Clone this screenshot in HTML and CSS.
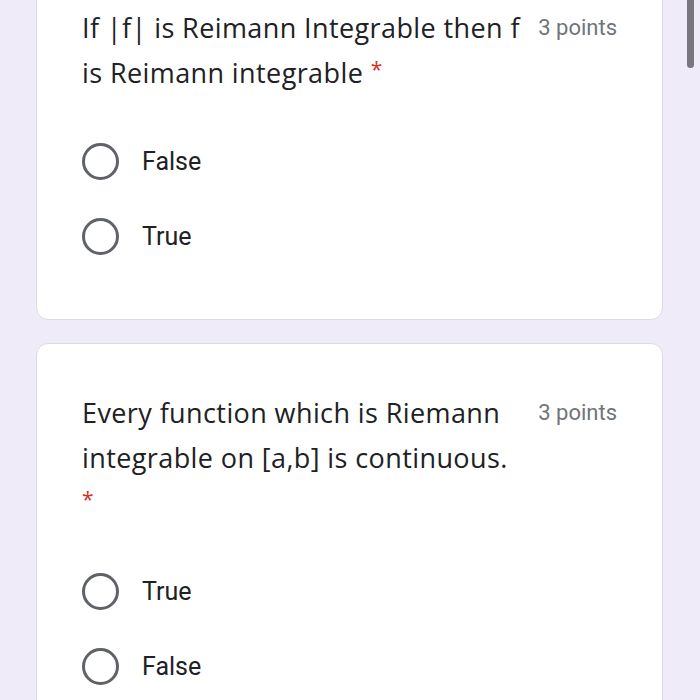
FILE: index.html
```html
<!DOCTYPE html>
<html lang="en">
<head>
    <meta charset="UTF-8">
    <meta name="viewport" content="width=device-width, initial-scale=1.0">
    <title>Quiz</title>
    <link rel="stylesheet" href="styles.css">
</head>
<body>

    <div class="form">
        <div class="card card-first">
            <div class="question">
                <div class="title">If |f| is Reimann Integrable then f is Reimann integrable <span class="req">*</span></div>
                <div class="points">3 points</div>
            </div>
            <div class="options">
                <label class="option"><span class="radio"></span><span class="label">False</span></label>
                <label class="option"><span class="radio"></span><span class="label">True</span></label>
            </div>
        </div>

        <div class="card">
            <div class="question">
                <div class="title">Every function which is Riemann integrable on [a,b] is continuous. <span class="req">*</span></div>
                <div class="points">3 points</div>
            </div>
            <div class="options">
                <label class="option"><span class="radio"></span><span class="label">True</span></label>
                <label class="option"><span class="radio"></span><span class="label">False</span></label>
            </div>
        </div>
    </div>

    <div class="scrollbar"></div>

</body>
</html>
```

FILE: styles.css
```css
* {
    margin: 0;
    padding: 0;
    box-sizing: border-box;
}

body {
    font-family: 'Roboto', 'Liberation Sans', sans-serif;
    background: #f0ebf8;
    color: #202124;
    height: 100vh;
    overflow: hidden;
}

.form {
    display: flex;
    flex-direction: column;
    gap: 23px;
    padding: 0 37px 0 36px;
}

.card {
    background: #fff;
    border: 1px solid #dadce0;
    border-radius: 12px;
    padding: 46px 45px 64px 45px;
}

.card-first {
    margin-top: -42px;
}

.question {
    display: flex;
    align-items: flex-start;
    gap: 14px;
}

.title {
    flex: 1;
    font-family: 'Open Sans', sans-serif;
    font-size: 27px;
    line-height: 45px;
    letter-spacing: 0.4px;
}

.req {
    color: #d93025;
    font-size: 21px;
    line-height: 1;
    vertical-align: 6px;
    letter-spacing: 0;
}

.points {
    font-size: 22px;
    line-height: 45px;
    color: #70757a;
    white-space: nowrap;
}

.options {
    display: flex;
    flex-direction: column;
    gap: 38px;
    margin-top: 48px;
}

.option {
    display: flex;
    align-items: center;
    gap: 23px;
}

.radio {
    width: 37px;
    height: 37px;
    border: 3.5px solid #5f6368;
    border-radius: 50%;
}

.label {
    font-size: 25px;
}

.scrollbar {
    position: fixed;
    top: -4px;
    right: 6px;
    width: 7px;
    height: 72px;
    border-radius: 4px;
    background: #79767d;
}
```
